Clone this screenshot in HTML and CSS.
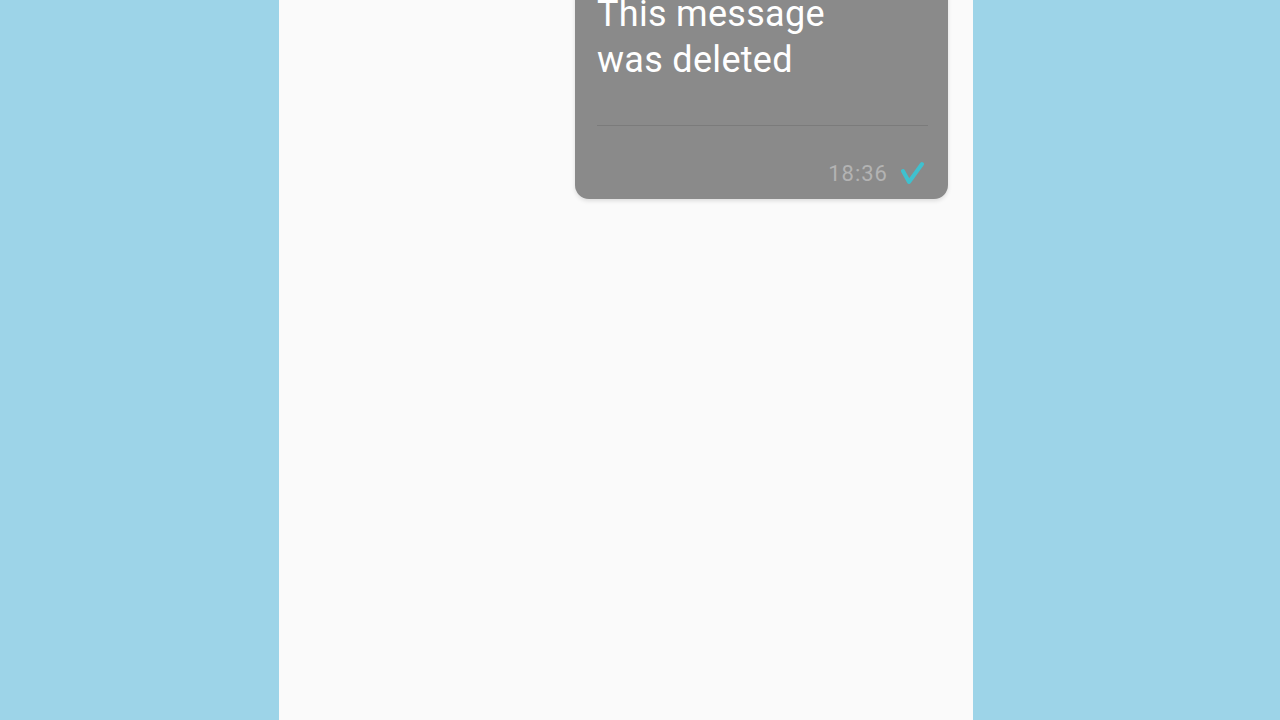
FILE: index.html
```html
<!DOCTYPE html>
<html lang="en">
<head>
  <meta charset="UTF-8">
  <meta name="viewport" content="width=device-width, initial-scale=1.0">
  <title>Chat</title>
  <link rel="stylesheet" href="styles.css">
</head>
<body>
  <main class="chat">
    <div class="bubble">
      <p class="bubble-text">This message<br>was deleted</p>
      <hr class="bubble-rule">
      <div class="bubble-meta">
        <span class="bubble-time">18:36</span>
        <svg class="bubble-check" width="24" height="24" viewBox="0 0 24 24">
          <path d="M3 10 L9 21 L22 3" fill="none" stroke="#3fc1cf" stroke-width="4" stroke-linecap="round" stroke-linejoin="round"/>
        </svg>
      </div>
    </div>
  </main>
</body>
</html>
```

FILE: styles.css
```css
/* Reset default browser styles */
* {
  margin: 0;
  padding: 0;
  box-sizing: border-box;
}

/* Page background */
body {
  background-color: #9dd4e8;
  font-family: Roboto, "Noto Sans", sans-serif;
  height: 720px;
  overflow: hidden;
  display: flex;
  padding-left: 279px;
}

/* Chat panel */
.chat {
  width: 694px;
  height: 720px;
  background-color: #fafafa;
  overflow: hidden;
  display: flex;
  flex-direction: column;
  align-items: flex-end;
  padding-right: 25px;
}

/* Message bubble */
.bubble {
  width: 373px;
  margin-top: -20px;
  padding: 11px 20px 12px 22px;
  background-color: #8a8a8a;
  border-radius: 0 0 14px 14px;
  box-shadow: 0 2px 4px rgba(0, 0, 0, 0.12);
}

.bubble-text {
  color: #ffffff;
  font-size: 36px;
  line-height: 46px;
  letter-spacing: 0.3px;
}

.bubble-rule {
  border: none;
  height: 1px;
  background-color: #7b7b7b;
  margin-top: 42px;
}

.bubble-meta {
  display: flex;
  justify-content: flex-end;
  align-items: center;
  gap: 12px;
  margin-top: 33px;
  height: 28px;
}

.bubble-time {
  color: #b3b3b3;
  font-size: 22px;
  letter-spacing: 1px;
}

.bubble-check {
  margin-right: 4px;
}
```
